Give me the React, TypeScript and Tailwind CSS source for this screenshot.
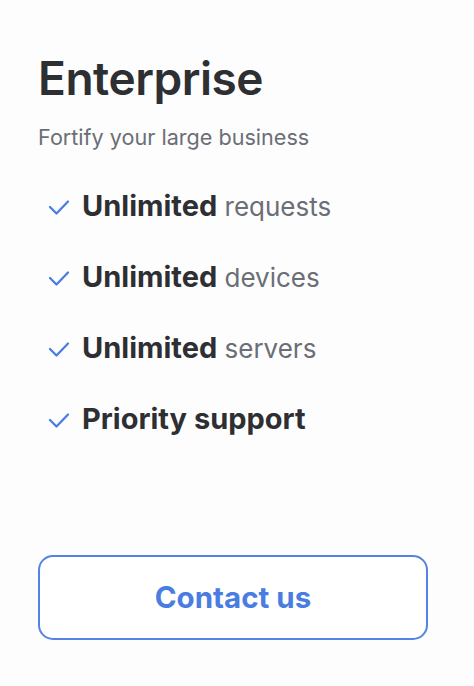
const features = [
  { strong: "Unlimited", rest: "requests" },
  { strong: "Unlimited", rest: "devices" },
  { strong: "Unlimited", rest: "servers" },
  { strong: "Priority support", rest: "" },
];

function Check() {
  return (
    <svg width="22" height="17" viewBox="0 0 22 17" fill="none" className="mt-[2px] shrink-0">
      <path
        d="M2 8 L8.5 14.5 L20 2.5"
        stroke="#4a7de2"
        strokeWidth="2.3"
        strokeLinecap="round"
        strokeLinejoin="round"
      />
    </svg>
  );
}

export default function App() {
  return (
    <main
      className="flex h-[686px] flex-col bg-[#fdfdfe] pl-[38px] pr-[46px] pt-[50px] pb-[46px]"
      style={{ fontFamily: "Inter, 'Noto Sans', sans-serif" }}
    >
      {/* heading */}
      <h1 className="text-[46px] font-semibold leading-[56px] tracking-[-0.01em] text-[#2d2f33]">
        Enterprise
      </h1>
      <p className="mt-[17px] text-[21.6px] leading-[28px] text-[#6b6e75]">
        Fortify your large business
      </p>

      {/* features */}
      <ul className="mt-[37px] flex flex-col gap-[35px] pl-[10px]">
        {features.map((f, i) => (
          <li key={i} className="flex h-[36px] items-center gap-[12px]">
            <Check />
            <span className="text-[26px] leading-[36px] text-[#6b6e75]">
              <span className="text-[29px] font-bold text-[#2d2f33]">{f.strong}</span>
              {f.rest && " " + f.rest}
            </span>
          </li>
        ))}
      </ul>

      <div className="flex-1" />

      {/* cta */}
      <button
        type="button"
        className="flex h-[85px] w-full items-center justify-center rounded-[15px] border-2 border-[#5683e3] bg-white text-[29.5px] font-bold text-[#4a7de2]"
      >
        Contact us
      </button>
    </main>
  );
}
